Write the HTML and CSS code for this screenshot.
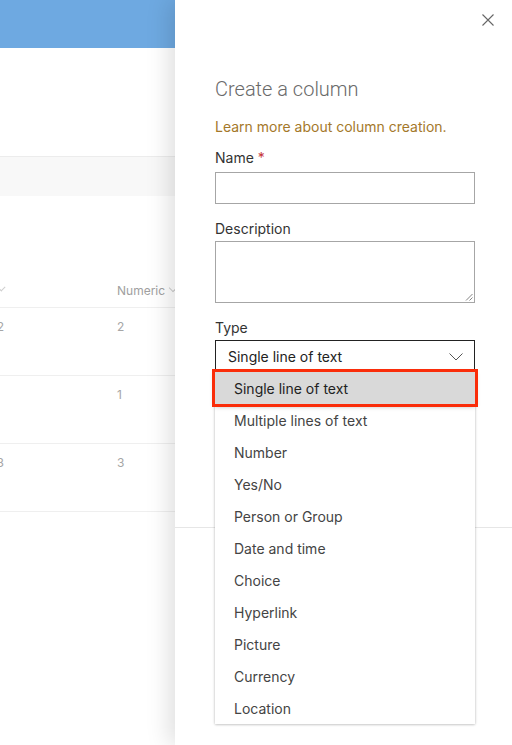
FILE: index.html
```html
<!DOCTYPE html>
<html>
<head>
<meta charset="utf-8">
<link rel="stylesheet" href="styles.css">
</head>
<body>
<div class="page">
  <div class="list">
    <div class="topbar"></div>
    <div class="spacer"></div>
    <div class="band"></div>
    <div class="gap"></div>
    <div class="thead">
      <div class="cell-a"><span class="chev-h"></span></div>
      <div class="cell-b">Numeric <span class="chev-h"></span></div>
    </div>
    <div class="row"><div class="cell-a"><span>2</span></div><div class="cell-b">2</div></div>
    <div class="row"><div class="cell-a"><span></span></div><div class="cell-b">1</div></div>
    <div class="row"><div class="cell-a"><span>3</span></div><div class="cell-b">3</div></div>
  </div>
  <div class="panel">
    <div class="panel-body">
      <div class="close-row">
        <svg class="close" width="12" height="12" viewBox="0 0 12 12"><path d="M0.5 0.5 L11.5 11.5 M11.5 0.5 L0.5 11.5" stroke="#666" stroke-width="1.1" fill="none"/></svg>
      </div>
      <h1 class="title">Create a column</h1>
      <a class="learn">Learn more about column creation.</a>
      <label class="lbl lbl-name">Name <span class="req">*</span></label>
      <div class="input"></div>
      <label class="lbl lbl-desc">Description</label>
      <div class="textarea">
        <svg class="grip" width="8" height="8" viewBox="0 0 8 8"><path d="M7.5 1 L1 7.5 M7.5 4.5 L4.5 7.5" stroke="#777" stroke-width="0.9"/></svg>
      </div>
      <label class="lbl lbl-type">Type</label>
      <div class="select-wrap">
        <div class="select">
          <span>Single line of text</span>
          <svg width="14" height="8" viewBox="0 0 14 8"><path d="M0.5 0.5 L7 7 L13.5 0.5" stroke="#555" stroke-width="1" fill="none"/></svg>
        </div>
        <ul class="menu">
          <li class="sel">Single line of text</li>
          <li>Multiple lines of text</li>
          <li>Number</li>
          <li>Yes/No</li>
          <li>Person or Group</li>
          <li>Date and time</li>
          <li>Choice</li>
          <li>Hyperlink</li>
          <li>Picture</li>
          <li>Currency</li>
          <li>Location</li>
        </ul>
      </div>
    </div>
    <div class="panel-foot"></div>
  </div>
</div>
</body>
</html>
```
FILE: styles.css
```css
html, body {
  margin: 0;
  padding: 0;
  width: 512px;
  height: 745px;
  overflow: hidden;
  background: #fff;
  font-family: "Inter", "Liberation Sans", Arial, sans-serif;
  color: #333;
}
.page {
  display: flex;
  width: 512px;
  height: 745px;
}
.list {
  width: 175px;
  flex: none;
  overflow: hidden;
  display: flex;
  flex-direction: column;
}
.topbar {
  height: 48px;
  background: #6ea9e1;
}
.spacer { height: 108px; }
.band {
  height: 40px;
  background: #f8f8f8;
  border-top: 1px solid #ececec;
  box-sizing: border-box;
}
.gap { height: 77px; }
.thead, .row {
  display: flex;
  border-bottom: 1px solid #efefef;
  width: 260px;
  flex: none;
  box-sizing: border-box;
}
.thead {
  height: 35px;
  align-items: center;
  font-size: 12px;
  color: #a0a0a0;
}
.row {
  height: 68px;
  font-size: 12px;
  color: #a6a6a6;
  align-items: flex-start;
  padding-top: 11px;
}
.cell-a {
  width: 4px;
  display: flex;
  justify-content: flex-end;
  white-space: nowrap;
  margin-right: 113px;
}
.cell-b {
  white-space: nowrap;
  display: flex;
  align-items: center;
}
.chev-h {
  display: inline-block;
  width: 5px;
  height: 5px;
  border-right: 1px solid #cfcfcf;
  border-bottom: 1px solid #cfcfcf;
  transform: rotate(45deg);
  margin-top: -4px;
}
.cell-b .chev-h { margin-left: 5px; }
.panel {
  flex: 1;
  position: relative;
  background: #fff;
  box-shadow: -6px 0 22px rgba(0,0,0,0.13);
  display: flex;
  flex-direction: column;
}
.panel-body {
  height: 527px;
  box-sizing: border-box;
  padding: 0 37px 0 40px;
  display: flex;
  flex-direction: column;
}
.panel-foot {
  border-top: 1px solid #e6e6e6;
  flex: 1;
}
.close-row {
  display: flex;
  justify-content: flex-end;
  margin-right: -19px;
  padding-top: 14px;
  height: 12px;
}
.title {
  margin: 51px 0 0 0;
  font-family: "Roboto", "Liberation Sans", sans-serif;
  font-weight: 300;
  font-size: 20px;
  line-height: 24px;
  color: #6a6a6a;
}
.learn {
  margin-top: 17px;
  font-size: 14px;
  line-height: 18px;
  color: #a4782a;
}
.lbl {
  display: block;
  font-size: 14px;
  line-height: 18px;
  color: #333;
}
.lbl-name { margin-top: 13px; }
.req { color: #c5363a; }
.input {
  margin-top: 5px;
  height: 32px;
  box-sizing: border-box;
  border: 1px solid #a6a6a6;
}
.lbl-desc { margin-top: 16px; }
.textarea {
  margin-top: 3px;
  height: 62px;
  box-sizing: border-box;
  border: 1px solid #a6a6a6;
  position: relative;
}
.grip {
  position: absolute;
  right: 1px;
  bottom: 1px;
}
.lbl-type { margin-top: 16px; }
.select-wrap {
  margin-top: 3px;
  position: relative;
}
.select {
  height: 32px;
  box-sizing: border-box;
  border: 1px solid #222;
  display: flex;
  align-items: center;
  justify-content: space-between;
  padding: 0 11px 0 12px;
  font-size: 14px;
  color: #222;
}
.select svg { margin-top: 1px; }
.menu {
  position: absolute;
  top: 32px;
  left: 0;
  right: 0;
  margin: 0;
  padding: 0;
  list-style: none;
  background: #fff;
  box-shadow: 0 0 3px rgba(0,0,0,0.2), 0 1px 2px rgba(0,0,0,0.12);
}
.menu li {
  height: 32px;
  display: flex;
  align-items: center;
  padding-left: 19px;
  font-size: 14px;
  color: #444;
}
.menu li.sel {
  background: #d9d9d9;
  color: #222;
  outline: 3px solid #fa2d0a;
  outline-offset: 0;
  box-shadow: 0 2px 5px rgba(0,0,0,0.35);
  position: relative;
}
```
